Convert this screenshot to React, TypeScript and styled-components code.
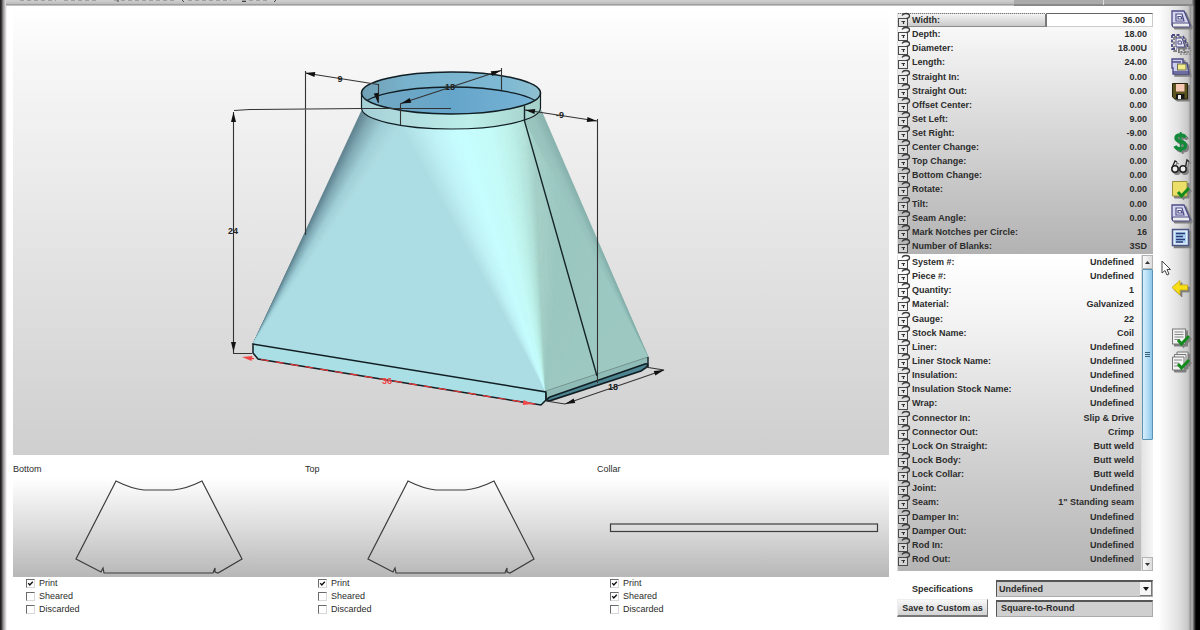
import React from 'react';
import styled, { createGlobalStyle, css } from 'styled-components';

const GlobalStyle = createGlobalStyle`
  * { box-sizing: border-box; }
  body { margin: 0; background: #fff; }
  body, input, button, select {
    font-family: "Liberation Sans", Arial, sans-serif;
    font-size: 9px;
    color: #2c2c2c;
  }
`;

const Frame = styled.div`
  display: flex;
  flex-direction: column;
  min-height: 100vh;
  background:
    linear-gradient(90deg, #999, #000 50%) right / 8px 100% no-repeat,
    linear-gradient(90deg, #222 0, #222 1px, #8c8a8a 3px, #c9c7c7 5px, #fff 7px, #fff 100%);
`;

const TitleBar = styled.header`
  display: flex;
  justify-content: space-between;
  height: 6px;
  margin: 0 8px 0 6px;
  background: linear-gradient(#d0d0d0, #bdbdbd 66%, #8d8d8d 80%, #e8e8e8);
`;

const TitleMarks = styled.svg`
  display: block;
  width: 300px;
  height: 3px;
`;

const CaptionButtons = styled.div`
  display: flex;
  gap: 1px;
  width: 178px;
  background: #ddd;
  border-bottom: 1px solid #888;
`;

const CaptionSegment = styled.span`
  flex: 1;
  background: #ababab;
  border-bottom: 1px solid #8a8a8a;
`;

const Body = styled.main`
  display: flex;
  flex: 1;
  padding-left: 13px;
`;

const Workspace = styled.section`
  flex: 1;
  min-width: 0;
`;

const Viewport = styled.div`
  height: 449px;
  background: linear-gradient(#fff, #f7f7f7 12%, #cfcfcf);
`;

const Scene = styled.svg`
  display: block;
  width: 100%;
  height: 100%;
`;

const PieceGrid = styled.div`
  display: grid;
  grid-template-columns: repeat(3, 1fr);
`;

const Piece = styled.section`
  display: flex;
  flex-direction: column;
`;

const PieceTitle = styled.h2`
  margin: 0;
  padding-top: 8px;
  height: 23px;
  font-size: 9px;
  line-height: 12px;
  font-weight: 400;
`;

const PieceCanvas = styled.div`
  height: 99px;
  background: linear-gradient(#fff, #dcdcdc 50%, #b7b7b7);
`;

const PieceOptions = styled.div`
  display: flex;
  flex-direction: column;
  padding-left: 13px;
`;

const CheckLabel = styled.label`
  display: flex;
  align-items: center;
  gap: 4px;
  height: 13px;
  line-height: 13px;
`;

const Check = styled.input`
  appearance: none;
  width: 9px;
  height: 9px;
  margin: 0;
  border: 1px solid;
  border-color: #6b6b6b #d8d8d8 #d8d8d8 #6b6b6b;
  background: #fff;
  &:checked {
    background: #fff
      url("data:image/svg+xml,%3Csvg xmlns='http://www.w3.org/2000/svg' viewBox='0 0 8 8'%3E%3Cpath d='M1.4 3.6L3.2 5.6L6.6 2' fill='none' stroke='%23111' stroke-width='1.6'/%3E%3C/svg%3E");
  }
`;

const Sidebar = styled.aside`
  width: 256px;
  margin: 7px 5px 0 8px;
  font-weight: 700;
`;

const PropertyPanel = styled.div<{ $scroll?: boolean }>`
  display: flex;
  border-left: 1px solid #ddd;
  background: ${(p) =>
    p.$scroll
      ? 'linear-gradient(#fff, #f4f4f4 20%, #b5b5b5)'
      : 'linear-gradient(#fdfdfd, #e9e9e9 25%, #b2b2b2)'};
  margin-top: ${(p) => (p.$scroll ? 1 : 0)}px;
`;

const PropertyList = styled.div<{ $height: number; $pad: number }>`
  display: grid;
  flex: 1;
  min-width: 0;
  grid-template-columns: minmax(0, 1fr);
  grid-auto-rows: 1fr;
  min-height: ${(p) => p.$height}px;
  padding-bottom: ${(p) => p.$pad}px;
`;

const Row = styled.div`
  display: flex;
  align-items: center;
`;

const RowLabel = styled.label<{ $active?: boolean }>`
  display: flex;
  flex: none;
  align-items: center;
  gap: 2px;
  width: 149px;
  height: 14px;
  line-height: 14px;
  white-space: nowrap;
  ${(p) =>
    p.$active &&
    css`
      background: linear-gradient(#f4f4f4, #c9c9c9);
      border-top: 1px dotted #777;
      border-right: 2px solid #777;
      border-bottom: 1px solid #8b8b8b;
    `}
`;

const RowInput = styled.input<{ $active?: boolean; $inset: number }>`
  flex: 1;
  min-width: 0;
  height: 14px;
  padding: 0 ${(p) => p.$inset}px 0 0;
  border: 0;
  background: transparent;
  text-align: right;
  font-weight: 700;
  ${(p) =>
    p.$active &&
    css`
      background: #fff;
      border-top: 1px solid #666;
      border-right: 1px solid #ccc;
      border-bottom: 1px solid #ccc;
      padding-right: 7px;
    `}
`;

const LockSvg = styled.svg`
  flex: none;
  width: 12px;
  height: 14px;
  overflow: visible;
`;

const ScrollBar = styled.div`
  display: flex;
  flex: none;
  flex-direction: column;
  width: 12px;
  border-left: 1px solid #ddd;
  background: linear-gradient(90deg, #e4e4e4, #f6f6f6);
`;

const ScrollButton = styled.button`
  display: flex;
  align-items: center;
  justify-content: center;
  height: 14px;
  padding: 0;
  border: 1px solid #b4b4b4;
  background: linear-gradient(90deg, #fafafa, #dcdcdc);
`;

const Thumb = styled.div`
  display: flex;
  align-items: center;
  justify-content: center;
  height: 171px;
  border: 1px solid #5c93b3;
  border-radius: 1px;
  background: linear-gradient(90deg, #d9effb, #b5def5 50%, #8fc7e8);
`;

const Spacer = styled.div`
  flex: 1;
`;

const Footer = styled.div`
  display: grid;
  grid-template-columns: 91px 1fr;
  column-gap: 8px;
  row-gap: 2px;
  align-items: center;
  padding-top: 9px;
`;

const FooterLabel = styled.label`
  text-align: center;
`;

const SelectBox = styled.div`
  display: flex;
  position: relative;
`;

const sunken = css`
  width: 100%;
  height: 17px;
  border: 1px solid;
  border-color: #555 #aaa #aaa #555;
  border-top-width: 2px;
  border-radius: 0;
  background: #cfcfcf;
  font-weight: 700;
`;

const SpecSelect = styled.select`
  ${sunken}
  appearance: none;
  padding: 0 14px 0 2px;
`;

const SelectArrow = styled.span`
  position: absolute;
  top: 2px;
  right: 1px;
  bottom: 1px;
  display: flex;
  align-items: center;
  justify-content: center;
  width: 12px;
  background: #f6f6f6;
  border-right: 1px solid #777;
  border-bottom: 1px solid #777;
  pointer-events: none;
`;

const NameInput = styled.input`
  ${sunken}
  padding: 0 0 2px 4px;
`;

const SaveButton = styled.button`
  height: 18px;
  padding: 0;
  border: 1px solid;
  border-color: #eee #777 #777 #eee;
  border-bottom-width: 2px;
  background: linear-gradient(#f8f8f8, #d2d2d2);
  font-weight: 700;
`;

const Toolbar = styled.nav`
  display: flex;
  flex-direction: column;
  align-items: flex-start;
  width: 42px;
  padding: 2px 0 0 11px;
  background: linear-gradient(
    90deg, #fff 0, #f4f4f4 8px, #e2e2e2 20px, #c8c8c8 30px, #8d8d8d 33px, #c4c4c4 34px, #555 36px, #000 38px, #000 100%
  );
`;

const ToolButton = styled.button<{ $gapAfter?: boolean }>`
  width: 22px;
  height: 24px;
  margin: 0 0 ${(p) => (p.$gapAfter ? 26 : 0)}px;
  padding: 0;
  border: 0;
  background: none;
`;

const ToolIcon = styled.svg`
  display: block;
  width: 22px;
  height: 24px;
  filter: drop-shadow(2px 2px 0 #808080);
`;

const Pointer = styled.svg`
  position: absolute;
  top: 260px;
  right: 28px;
  width: 11px;
  height: 17px;
`;

type Pt = [number, number];
type Stop = { at: Pt; rgb: [number, number, number] };

/* Shades a conical surface as thin triangles that share one apex. */
function Fan({ apex, stops, steps = 12 }: { apex: Pt; stops: Stop[]; steps?: number }) {
  const samples: Stop[] = [];
  stops.slice(0, -1).forEach((a, i) => {
    const b = stops[i + 1];
    for (let k = 0; k < steps; k++) {
      const t = k / steps;
      const mix = (p: number, q: number) => p + (q - p) * t;
      samples.push({
        at: [mix(a.at[0], b.at[0]), mix(a.at[1], b.at[1])],
        rgb: [mix(a.rgb[0], b.rgb[0]), mix(a.rgb[1], b.rgb[1]), mix(a.rgb[2], b.rgb[2])],
      });
    }
  });
  samples.push(stops[stops.length - 1]);
  return (
    <g strokeWidth=".6">
      {samples.slice(0, -1).map((s, i) => {
        const n = samples[i + 1];
        const c = `rgb(${s.rgb.map(Math.round).join(',')})`;
        return <polygon key={i} points={`${apex} ${s.at} ${n.at}`} fill={c} stroke={c} />;
      })}
    </g>
  );
}

function Arrow({ x, y, angle, color = '#111' }: { x: number; y: number; angle: number; color?: string }) {
  return <path d="M0 0L-10 -2.5V2.5Z" fill={color} transform={`translate(${x} ${y}) rotate(${angle})`} />;
}

function FittingScene() {
  return (
    <Scene viewBox="13 6 876 449" role="img" aria-label="Square to round fitting">
      <defs>
        <linearGradient id="wall">
          <stop offset="0" stopColor="#6f9fb4" />
          <stop offset=".25" stopColor="#79b2cc" />
          <stop offset=".8" stopColor="#7db8d4" />
          <stop offset="1" stopColor="#8fc0cf" />
        </linearGradient>
        <linearGradient id="bore">
          <stop offset="0" stopColor="#74a9c2" />
          <stop offset=".5" stopColor="#65a5ca" />
          <stop offset="1" stopColor="#78b4d6" />
        </linearGradient>
        <linearGradient id="collar">
          <stop offset="0" stopColor="#a4cfd6" />
          <stop offset=".2" stopColor="#afdadd" />
          <stop offset=".6" stopColor="#bdeee9" />
          <stop offset="1" stopColor="#a3cfc8" />
        </linearGradient>
        <clipPath id="rim"><ellipse cx="451" cy="93" rx="89.5" ry="21" /></clipPath>
      </defs>

      <polygon points="253,344 401,125 546,392" fill="#addde4" />
      <Fan apex={[253, 344]} stops={[
        { at: [361.5, 111], rgb: [92, 128, 141] },
        { at: [370, 117], rgb: [125, 168, 179] },
        { at: [384, 121], rgb: [158, 206, 215] },
        { at: [402, 125], rgb: [173, 221, 228] },
      ]} />
      <Fan apex={[648, 357]} stops={[
        { at: [520, 121], rgb: [154, 199, 192] },
        { at: [534, 117], rgb: [148, 192, 186] },
        { at: [541, 110], rgb: [134, 177, 172] },
      ]} />
      <Fan apex={[546, 392]} stops={[
        { at: [399, 124], rgb: [173, 221, 228] },
        { at: [430, 128], rgb: [190, 243, 246] },
        { at: [455, 129], rgb: [198, 253, 255] },
        { at: [490, 127], rgb: [196, 251, 248] },
        { at: [510, 124], rgb: [187, 240, 232] },
        { at: [524, 121], rgb: [176, 224, 215] },
        { at: [534, 140], rgb: [163, 207, 199] },
        { at: [560, 190], rgb: [154, 199, 192] },
        { at: [648, 357], rgb: [156, 200, 193] },
      ]} />

      <path d="M361.5 93V108A89.5 21 0 0 0 540.5 108V93Z" fill="url(#collar)" />
      <ellipse cx="451" cy="93" rx="89.5" ry="21" fill="url(#wall)" />
      <g clipPath="url(#rim)">
        <ellipse cx="451" cy="108" rx="89.5" ry="21" fill="url(#bore)" stroke="#111e24" strokeWidth="1.3" />
      </g>
      <g fill="none" stroke="#111e24" strokeWidth="1.5">
        <ellipse cx="451" cy="93" rx="89.5" ry="21" />
        <path d="M361.5 93V108A89.5 21 0 0 0 540.5 108V93" strokeWidth="1.2" />
      </g>

      <path d="M253 344L546 392V400L541 405L258 359L253 353Z" fill="#a9dfe5" stroke="#111e24" strokeWidth="1.5" />
      <path d="M546 392L648 357V366L548 401Z" fill="#8fbcb6" />
      <path d="M550 397L645 364Q649 363 647 367L641 371L549 401Q545 400 550 397Z" fill="#4d8592" stroke="#111e24" strokeWidth="1.7" />
      <path d="M546 391L648 357" stroke="#73918d" />
      <path d="M648 357V367M546 392V401" stroke="#111e24" strokeWidth="1.4" />

      <g fill="none" stroke="#333" strokeWidth="1.1">
        <path d="M305.500 71V235M305 73L378 84.500M234 110.500L250 109.500L362 108.500M233.500 112V353M233 353.500H252" />
        <path d="M378.500 84V103M362 108.500H451M400.500 103V125M501.500 68V90M401 103.500L501 70.500" />
        <path d="M525 110L597 121M597.500 119V383M546 401L565 404L664 370L645 367" />
      </g>
      <path d="M524.500 106V121L597 376" fill="none" stroke="#152528" strokeWidth="1.4" />
      <path d="M246 358L258 359L541 405" fill="none" stroke="#e33" strokeWidth="1.2" strokeDasharray="8 7" />

      <Arrow x={305} y={73} angle={189} />
      <Arrow x={378} y={103} angle={80} />
      <Arrow x={233.5} y={112} angle={-90} />
      <Arrow x={233.5} y={352} angle={90} />
      <Arrow x={401} y={103.5} angle={162} />
      <Arrow x={501} y={70.5} angle={-18} />
      <Arrow x={525} y={110} angle={189} />
      <Arrow x={597} y={121} angle={9} />
      <Arrow x={565} y={404} angle={161} />
      <Arrow x={664} y={370} angle={-19} />
      <Arrow x={242} y={357} angle={189} color="#f04848" />
      <Arrow x={533} y={404} angle={9} color="#f04848" />

      <g fontFamily="Liberation Sans, Arial, sans-serif" fontSize="9" fontWeight="700" fill="#222" textAnchor="middle">
        <text x="340" y="82">9</text>
        <text x="233" y="234">24</text>
        <text x="450" y="90">18</text>
        <text x="560" y="118">-9</text>
        <text x="613" y="390">18</text>
        <text x="387" y="384" fill="#f04848">36</text>
      </g>
    </Scene>
  );
}

function Lock() {
  return (
    <LockSvg viewBox="0 0 12 14" aria-hidden="true">
      <rect x=".5" y="5.500" width="9" height="8" fill="#f2f2f2" fillOpacity=".5" stroke="#4a4a4a" />
      <path d="M3.500 8.500H7M5.500 8.500V11" stroke="#333" strokeWidth="1.200" fill="none" />
      <path d="M4 2.500Q5 .5 8 .5Q11.500 .5 11.500 3Q11.500 5 8.500 5.500" stroke="#3a3a3a" strokeWidth="1.300" fill="none" />
    </LockSvg>
  );
}

type Property = [string, string];

const dimensions: Property[] = [
  ['Width:', '36.00'], ['Depth:', '18.00'], ['Diameter:', '18.00U'], ['Length:', '24.00'],
  ['Straight In:', '0.00'], ['Straight Out:', '0.00'], ['Offset Center:', '0.00'],
  ['Set Left:', '9.00'], ['Set Right:', '-9.00'], ['Center Change:', '0.00'],
  ['Top Change:', '0.00'], ['Bottom Change:', '0.00'], ['Rotate:', '0.00'], ['Tilt:', '0.00'],
  ['Seam Angle:', '0.00'], ['Mark Notches per Circle:', '16'], ['Number of Blanks:', '3SD'],
];

const attributes: Property[] = [
  ['System #:', 'Undefined'], ['Piece #:', 'Undefined'], ['Quantity:', '1'], ['Material:', 'Galvanized'],
  ['Gauge:', '22'], ['Stock Name:', 'Coil'], ['Liner:', 'Undefined'], ['Liner Stock Name:', 'Undefined'],
  ['Insulation:', 'Undefined'], ['Insulation Stock Name:', 'Undefined'], ['Wrap:', 'Undefined'],
  ['Connector In:', 'Slip & Drive'], ['Connector Out:', 'Crimp'], ['Lock On Straight:', 'Butt weld'],
  ['Lock Body:', 'Butt weld'], ['Lock Collar:', 'Butt weld'], ['Joint:', 'Undefined'],
  ['Seam:', '1" Standing seam'], ['Damper In:', 'Undefined'], ['Damper Out:', 'Undefined'],
  ['Rod In:', 'Undefined'], ['Rod Out:', 'Undefined'],
];

function Properties({ items, prefix, active, inset, height, pad }: {
  items: Property[]; prefix: string; active?: number; inset: number; height: number; pad: number;
}) {
  return (
    <PropertyList $height={height} $pad={pad}>
      {items.map(([label, value], i) => (
        <Row key={label}>
          <RowLabel htmlFor={`${prefix}-${i}`} $active={i === active}><Lock />{label}</RowLabel>
          <RowInput id={`${prefix}-${i}`} defaultValue={value} $active={i === active} $inset={inset} />
        </Row>
      ))}
    </PropertyList>
  );
}

const gore = (
  <path d="M103 3Q119 11 131 12H160Q173 11 189 3L229 81L205 95L202 94L202 90L200 95H91L90 90L88 94L63 81Z" />
);

const pieces = [
  { name: 'Bottom', shape: gore, checked: [true, false, false] },
  { name: 'Top', shape: gore, checked: [true, false, false] },
  { name: 'Collar', shape: <rect x="13.500" y="46" width="267" height="7.500" />, checked: [true, true, false] },
];

const ink = '#4c4c86';

const screen = (
  <>
    <path d="M3 3H15L21 17H3Z" fill="#d7d7f0" stroke={ink} strokeWidth="1.300" />
    <path d="M3.500 15H20L21 19H3.500Z" fill="#eee" stroke={ink} />
    <path d="M7 6H13L15 13H7ZM9 8.500H12L13 11H9Z" fill="#f4f4ff" stroke={ink} strokeWidth="1.200" />
  </>
);
const tick = <path d="M9 14L12.500 18L20 10" fill="none" stroke="#148a1c" strokeWidth="3" />;

const tools: { label: string; gap?: boolean; art: React.ReactNode }[] = [
  { label: 'New fitting', art: screen },
  {
    label: 'Select fitting',
    art: (
      <>
        <path d="M3 3H11M3 3V18M14 4L20 17M3 17H8" fill="none" stroke={ink} strokeWidth="1.800" strokeDasharray="3 1.500" />
        <path d="M7 6H13L16 15H7ZM9 9H12L13 12H9Z" fill="#e6e6f2" stroke={ink} />
        <path d="M9 20H20M10 17V21M15 17V21" fill="none" stroke="#555" strokeWidth="1.200" strokeDasharray="2 1" />
      </>
    ),
  },
  {
    label: 'Show view',
    art: (
      <>
        <path d="M3 3H14V7H18L20 18H4V12H3Z" fill="#cfcfee" stroke={ink} strokeWidth="1.400" />
        <rect x="8.500" y="8" width="8.500" height="6" fill="#f3ee8a" stroke="#6c6c50" />
        <path d="M3 6H12M4 16H19" stroke={ink} strokeWidth="1.500" />
      </>
    ),
  },
  {
    label: 'Save',
    gap: true,
    art: (
      <>
        <path d="M3.500 3.500H18.500V19H6L3.500 17Z" fill="#5b5320" stroke="#27230d" />
        <rect x="7" y="4" width="8.500" height="7.500" fill="#f7c8b4" />
        <rect x="7" y="14" width="8.500" height="5" fill="#161616" />
        <rect x="9" y="15" width="3" height="4" fill="#eee" />
      </>
    ),
  },
  {
    label: 'Pricing',
    art: (
      <>
        <path d="M16.500 7.500Q15 5 11.500 5Q7 5 7 8Q7 10.500 11.500 11.500Q16.500 12.500 16.500 15.500Q16.500 19 11.500 19Q7.500 19 6 16" fill="none" stroke="#128a3a" strokeWidth="3.400" />
        <path d="M11.700 2V22" stroke="#128a3a" strokeWidth="1.800" />
      </>
    ),
  },
  {
    label: 'Preview',
    art: (
      <>
        <circle cx="6" cy="15" r="3.200" fill="#eee" stroke="#222" strokeWidth="1.500" />
        <circle cx="14" cy="15" r="3.200" fill="#eee" stroke="#222" strokeWidth="1.500" />
        <path d="M3 14L6 7L8 8M16.500 13L18 6L20 7.500" fill="none" stroke="#222" strokeWidth="1.300" />
      </>
    ),
  },
  { label: 'Confirm note', art: <><path d="M3.500 3.500H18V18H3.500Z" fill="#ecdf69" stroke="#9a923b" />{tick}</> },
  { label: 'View fitting', art: screen },
  {
    label: 'Notes',
    gap: true,
    art: (
      <>
        <rect x="3.500" y="3.500" width="16" height="16" fill="#dcecf8" stroke="#4a5684" strokeWidth="1.500" />
        <rect x="6" y="6" width="11" height="11" fill="#a9d0f0" />
        <path d="M7 7.500H16M7 10.500H14M7 13.500H16M7 16H14" stroke="#283a78" strokeWidth="1.300" />
      </>
    ),
  },
  { label: 'Back', gap: true, art: <path d="M3 11.500L11 4.500V9H18.500V14H11V19Z" fill="#f8de16" stroke="#c5a80a" strokeWidth=".8" /> },
  {
    label: 'Accept sheet',
    art: <><rect x="3.500" y="3" width="13" height="15" fill="#f1f1f1" stroke="#777" /><path d="M5.500 6H14.500M5.500 8.500H14.500M5.500 11H14.500M5.500 13.500H11" stroke="#888" />{tick}</>,
  },
  {
    label: 'Accept all sheets',
    art: (
      <>
        <path d="M8 2H19V14H8Z" fill="#eee" stroke="#777" />
        <path d="M5.500 4.500H17V17H5.500Z" fill="#eee" stroke="#777" />
        <path d="M3.500 7H15V20H3.500Z" fill="#f4f4f4" stroke="#777" />
        <path d="M5 10H13M5 13H10M5 16H10" stroke="#888" />
        {tick}
      </>
    ),
  },
];

export default function App() {
  return (
    <Frame>
      <GlobalStyle />
      <TitleBar>
        <TitleMarks viewBox="0 0 300 3" aria-hidden="true">
          <path d="M14 0H50M58 0H92M108 0H170M182 0H225M236 0H262" stroke="#777" strokeDasharray="4 3" />
          <path d="M112 0V2M176 0L178 2M236 1.500H240M268 2L270 0" stroke="#444" />
        </TitleMarks>
        <CaptionButtons aria-hidden="true"><CaptionSegment /><CaptionSegment /></CaptionButtons>
      </TitleBar>
      <Body>
        <Workspace>
          <Viewport><FittingScene /></Viewport>
          <PieceGrid>
            {pieces.map((piece) => (
              <Piece key={piece.name}>
                <PieceTitle>{piece.name}</PieceTitle>
                <PieceCanvas>
                  <Scene viewBox="0 0 292 99" fill="none" stroke="#3c3c3c" strokeWidth="1.200" aria-hidden="true">
                    {piece.shape}
                  </Scene>
                </PieceCanvas>
                <PieceOptions>
                  {['Print', 'Sheared', 'Discarded'].map((option, i) => (
                    <CheckLabel key={option}>
                      <Check type="checkbox" defaultChecked={piece.checked[i]} />
                      {option}
                    </CheckLabel>
                  ))}
                </PieceOptions>
              </Piece>
            ))}
          </PieceGrid>
        </Workspace>
        <Sidebar>
          <PropertyPanel>
            <Properties items={dimensions} prefix="dimension" active={0} inset={6} height={241} pad={1} />
          </PropertyPanel>
          <PropertyPanel $scroll>
            <Properties items={attributes} prefix="attribute" inset={7} height={316} pad={5} />
            <ScrollBar>
              <ScrollButton aria-label="Scroll up">
                <svg width="5" height="3" aria-hidden="true"><path d="M0 3L2.500 0L5 3Z" fill="#333" /></svg>
              </ScrollButton>
              <Thumb>
                <svg width="5" height="6" aria-hidden="true"><path d="M0 .5H5M0 2.500H5M0 4.500H5" stroke="#37627c" /></svg>
              </Thumb>
              <Spacer />
              <ScrollButton aria-label="Scroll down">
                <svg width="5" height="3" aria-hidden="true"><path d="M0 0H5L2.500 3Z" fill="#333" /></svg>
              </ScrollButton>
            </ScrollBar>
          </PropertyPanel>
          <Footer>
            <FooterLabel htmlFor="spec">Specifications</FooterLabel>
            <SelectBox>
              <SpecSelect id="spec"><option>Undefined</option></SpecSelect>
              <SelectArrow>
                <svg width="6" height="4" aria-hidden="true"><path d="M0 0H6L3 4Z" fill="#111" /></svg>
              </SelectArrow>
            </SelectBox>
            <SaveButton type="button">Save to Custom as</SaveButton>
            <NameInput aria-label="Custom name" defaultValue="Square-to-Round" />
          </Footer>
        </Sidebar>
        <Toolbar aria-label="Tools">
          {tools.map((tool) => (
            <ToolButton key={tool.label} type="button" aria-label={tool.label} $gapAfter={tool.gap}>
              <ToolIcon viewBox="0 0 22 24" aria-hidden="true">{tool.art}</ToolIcon>
            </ToolButton>
          ))}
        </Toolbar>
      </Body>
      <Pointer viewBox="0 0 11 17" aria-hidden="true">
        <path d="M1 1V13L4 10.500L6 15L8 14L6 9.500H9.500Z" fill="#fff" stroke="#444" />
      </Pointer>
    </Frame>
  );
}
